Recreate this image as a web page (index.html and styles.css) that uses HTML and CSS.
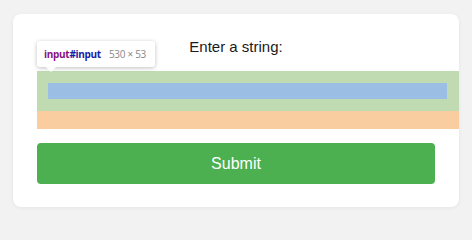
FILE: index.html
```html
<!DOCTYPE html>
<html>
<head>
<meta charset="utf-8">
<link rel="stylesheet" href="styles.css">
</head>
<body>
<div class="page">
  <div class="card">
    <div class="label">Enter a string:</div>
    <div class="margin-box">
      <div class="padding-box">
        <div class="content-box"></div>
      </div>
    </div>
    <button class="submit">Submit</button>
    <div class="tip">
      <span class="tag">input</span><span class="id">#input</span><span class="dims">530 × 53</span>
      <span class="arrow"></span>
    </div>
  </div>
</div>
</body>
</html>
```
FILE: styles.css
```css
html, body {
  margin: 0;
  padding: 0;
  background: #ffffff;
}
.page {
  width: 472px;
  height: 240px;
  background: #f2f2f2;
  padding: 14px 0 0 13px;
  box-sizing: border-box;
}
.card {
  position: relative;
  width: 446px;
  height: 193px;
  box-sizing: border-box;
  background: #ffffff;
  border-radius: 8px;
  box-shadow: 0 1px 4px rgba(0,0,0,0.06);
  padding: 24px;
  font-family: "Liberation Sans", Arial, sans-serif;
}
.label {
  text-align: center;
  font-size: 15px;
  line-height: 18px;
  color: #1a1a1a;
  margin-bottom: 15px;
}
.margin-box {
  width: 422px;
  background: #f9cd9f;
  padding-bottom: 18px;
}
.padding-box {
  background: #c0dbb1;
  padding: 12px 12px 12px 11px;
}
.content-box {
  height: 16px;
  background: #9bbfe4;
}
.submit {
  display: block;
  margin-top: 14px;
  width: 398px;
  height: 41px;
  border: none;
  border-radius: 4px;
  background: #4caf50;
  color: #ffffff;
  font-family: "Liberation Sans", Arial, sans-serif;
  font-size: 16px;
  padding: 0;
}
.tip {
  position: absolute;
  left: 24px;
  top: 27px;
  width: 118px;
  height: 26px;
  box-sizing: border-box;
  background: #ffffff;
  border-radius: 3px;
  box-shadow: 0 1px 4px rgba(0,0,0,0.25);
  padding: 0 0 0 7px;
  font-family: "Open Sans", "Noto Sans", sans-serif;
  font-size: 10px;
  line-height: 26px;
  white-space: nowrap;
}
.tag {
  color: #881280;
  font-weight: bold;
  letter-spacing: -0.3px;
}
.id {
  color: #1a1aa6;
  font-weight: bold;
  letter-spacing: -0.3px;
}
.dims {
  color: #888888;
  margin-left: 8px;
  font-size: 10px;
  letter-spacing: -0.3px;
}
.arrow {
  position: absolute;
  left: 9px;
  bottom: -5px;
  width: 0;
  height: 0;
  border-left: 5px solid transparent;
  border-right: 5px solid transparent;
  border-top: 5px solid #ffffff;
}
```
